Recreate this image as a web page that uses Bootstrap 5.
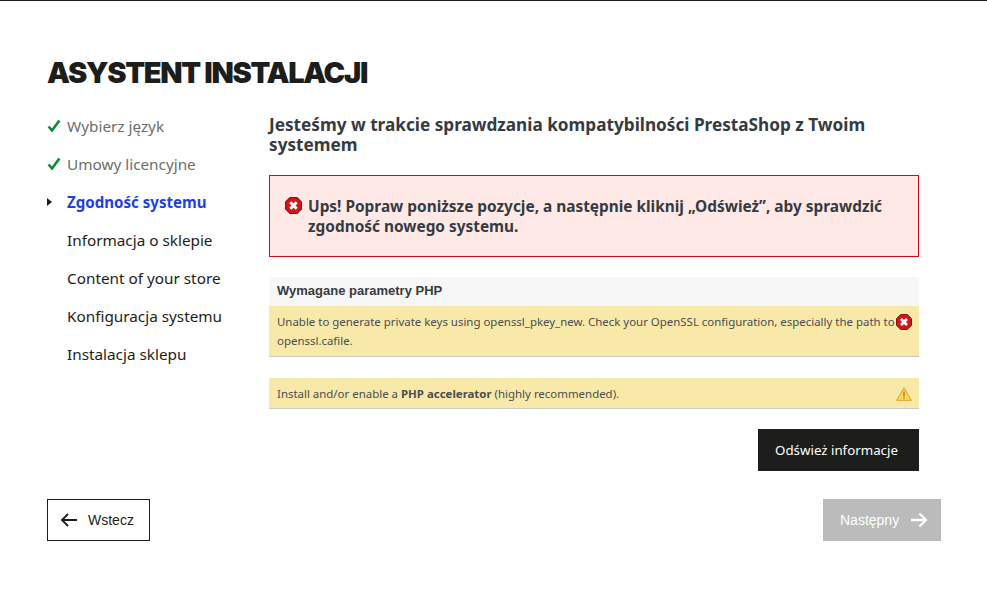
<!DOCTYPE html>
<html lang="pl">
<head>
<meta charset="utf-8">
<title>Asystent instalacji</title>
<link href="https://cdn.jsdelivr.net/npm/bootstrap@5.3.0/dist/css/bootstrap.min.css" rel="stylesheet">
<style>
html,body{height:100%;}
body{background:#fff;color:#363a41;font-family:"Noto Sans","Open Sans",sans-serif;border-top:1px solid #1d1d1b;}
.install-page{padding:50px 46px 0 47px;width:987px;}
.page-title{font-family:"Inter","Liberation Sans",sans-serif;font-weight:900;font-size:29px;line-height:44px;color:#1d1d1b;letter-spacing:-1.3px;margin:0 0 12px;}
.steps{width:222px;flex:none;margin:0;padding:0;list-style:none;}
.steps li{height:38px;display:flex;align-items:center;font-size:15.3px;color:#1d1d1b;padding-left:20px;position:relative;white-space:nowrap;}
.steps li.done{color:#6c6c6c;}
.steps li.now{color:#1f3fe0;font-weight:700;font-size:15.1px;}
.step-mark{position:absolute;left:0;top:50%;transform:translateY(-50%);display:block;}
.main-col{width:650px;flex:none;}
.main-head{font-size:17.2px;line-height:20px;font-weight:700;color:#363a41;margin:0 0 20px;padding-top:8px;}
.fail-box{background:#ffe9e7;border:1px solid #d10a10;height:82px;padding:21px 15px 0;display:flex;gap:6px;font-size:15.4px;line-height:20px;font-weight:700;margin-bottom:20px;color:#363a41;}
.fail-box svg{flex:none;}
.req-head{background:#f7f7f7;font-family:"Liberation Sans",sans-serif;font-size:13px;font-weight:700;height:29px;line-height:28px;padding:0 8px;color:#363a41;}
.req-row{background:#f8e9a8;border-bottom:1px solid #c9c9c9;font-size:11.45px;line-height:19px;padding:6px 23px 5px 8px;position:relative;color:#4a4d52;}
.req-row.one{padding-bottom:6px;}
.req-row svg{position:absolute;right:7px;}
.req-gap{height:21px;}
.act-bar{margin-top:20px;}
.btn-refresh{background:#1d1d1b;color:#fff;border:0;border-radius:0;width:161px;height:42px;font-size:13.3px;padding:2px 4px 0 0;}
.btn-refresh:hover{background:#1d1d1b;color:#fff;}
.btn-back,.btn-next{border-radius:0;height:42px;display:flex;align-items:center;font-family:"Liberation Sans",sans-serif;font-size:14px;padding:0;}
.btn-back{width:103px;background:#fff;border:1px solid #1d1d1b;color:#1d1d1b;gap:10px;padding-left:12px;}
.btn-next:disabled{width:118px;background:#bbb;border:0;color:#fff;gap:11px;padding-left:17px;opacity:1;}
.foot-bar{margin-top:28px;}
</style>
</head>
<body>
<div class="install-page">
  <h1 class="page-title text-uppercase">Asystent instalacji</h1>
  <div class="d-flex">
    <ul class="steps">
      <li class="done"><svg class="step-mark" width="14" height="13" viewBox="0 0 14 13"><path d="M1.6 7l3.400 4L12.400 1" fill="none" stroke="#0a8a3c" stroke-width="2.600"/></svg>Wybierz język</li>
      <li class="done"><svg class="step-mark" width="14" height="13" viewBox="0 0 14 13"><path d="M1.6 7l3.400 4L12.400 1" fill="none" stroke="#0a8a3c" stroke-width="2.600"/></svg>Umowy licencyjne</li>
      <li class="now"><svg class="step-mark" width="5" height="8" viewBox="0 0 5 8"><path d="M0 0l5 4-5 4z" fill="#1d1d1b"/></svg>Zgodność systemu</li>
      <li>Informacja o sklepie</li>
      <li>Content of your store</li>
      <li>Konfiguracja systemu</li>
      <li>Instalacja sklepu</li>
    </ul>
    <div class="main-col">
      <h2 class="main-head">Jesteśmy w trakcie sprawdzania kompatybilności PrestaShop z Twoim systemem</h2>
      <div class="fail-box">
        <svg width="17" height="17" viewBox="0 0 16 16"><path d="M4.700.5h6.600l4.200 4.200v6.600l-4.200 4.200H4.700L.5 11.300V4.700z" fill="#d0161d" stroke="#8f0d12"/><path d="M5 5l6 6M11 5l-6 6" stroke="#fff" stroke-width="2.800"/></svg>
        <div>Ups! Popraw poniższe pozycje, a następnie kliknij „Odśwież”, aby sprawdzić zgodność nowego systemu.</div>
      </div>
      <div class="req-head">Wymagane parametry PHP</div>
      <div class="req-row one">Unable to generate private keys using openssl_pkey_new. Check your OpenSSL configuration, especially the path to openssl.cafile.
        <svg style="top:8px" width="16" height="16" viewBox="0 0 16 16"><path d="M4.700.5h6.600l4.200 4.200v6.600l-4.200 4.200H4.700L.5 11.300V4.700z" fill="#d0161d" stroke="#8f0d12"/><path d="M5 5l6 6M11 5l-6 6" stroke="#fff" stroke-width="2.800"/></svg>
      </div>
      <div class="req-gap"></div>
      <div class="req-row">Install and/or enable a <strong>PHP accelerator</strong> (highly recommended).
        <svg style="top:9px" width="16" height="14" viewBox="0 0 16 14"><path d="M8 .8L15.300 13.300H.7z" fill="#fbd75b" stroke="#e0a030"/><path d="M8 4.500v5M8 10.500v1.500" stroke="#b9852a" stroke-width="1.600"/></svg>
      </div>
      <div class="d-flex justify-content-end act-bar">
        <button type="button" class="btn btn-refresh">Odśwież informacje</button>
      </div>
    </div>
  </div>
  <div class="d-flex justify-content-between foot-bar">
    <button type="button" class="btn btn-back"><svg width="18" height="14" viewBox="0 0 18 14"><path d="M17 7H2M8 1L2 7l6 6" fill="none" stroke="#1d1d1b" stroke-width="1.800"/></svg>Wstecz</button>
    <button type="button" class="btn btn-next" disabled>Następny<svg width="18" height="16" viewBox="0 0 18 16"><path d="M1 8h15M9.500 1.500L16 8l-6.500 6.500" fill="none" stroke="#fff" stroke-width="2.400"/></svg></button>
  </div>
</div>
<script src="https://cdn.jsdelivr.net/npm/bootstrap@5.3.0/dist/js/bootstrap.bundle.min.js"></script>
</body>
</html>
